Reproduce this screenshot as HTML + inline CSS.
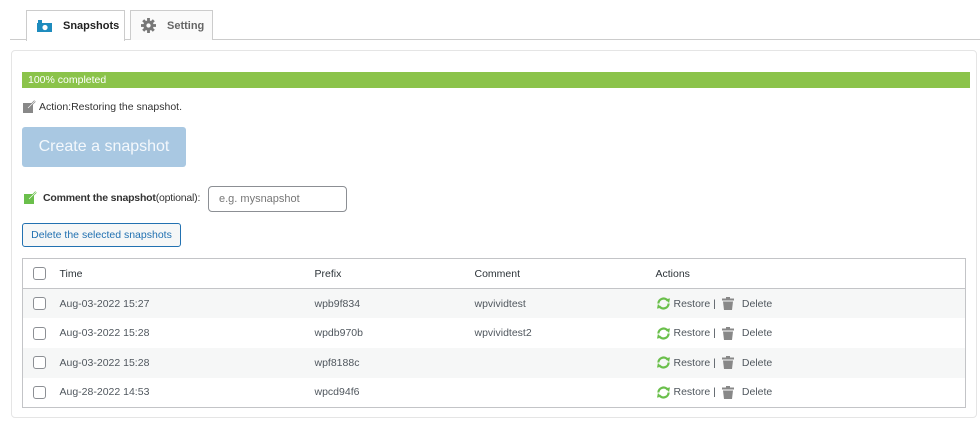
<!DOCTYPE html>
<html><head><meta charset="utf-8"><style>
*{box-sizing:border-box}
body{margin:0;width:980px;height:441px;background:#fff;font-family:"Liberation Sans",sans-serif;font-size:10.5px;color:#444;position:relative;overflow:hidden}
.abs{position:absolute}
.tabline{left:10px;right:0;top:39px;height:1px;background:#ccc}
.tab{top:10px;height:30px;border:1px solid #ccc;border-bottom:none;background:#fafafa;font-weight:bold;font-size:11px;color:#666;display:flex;align-items:center}
.tab.active{background:#fff;height:31px;color:#222}
.panel{left:11px;top:50px;width:966px;height:368px;border:1px solid #e5e5e5;border-radius:4px}
.bar{left:22px;top:72px;width:948px;height:16px;background:#8bc34a;color:#fff;font-size:10.5px;line-height:16px;padding-left:6px}
.btn{left:22px;top:127px;width:164px;height:40px;background:#a9c8e2;border-radius:3px;color:#f4f8fc;font-size:16px;text-align:center;line-height:40px}
.input{left:208px;top:186px;width:139px;height:26px;border:1px solid #8c8f94;border-radius:4px;color:#777;font-size:11px;line-height:24px;padding-left:10px}
.del{left:22px;top:223px;width:159px;height:24px;border:1px solid #2271b1;border-radius:3px;color:#2271b1;font-size:10.5px;line-height:22px;text-align:center;background:#f6f7f7}
table{position:absolute;left:22px;top:258px;width:944px;border:1px solid #c3c4c7;border-collapse:collapse;font-size:10.5px;color:#50575e}
td{height:29.7px;padding:0;vertical-align:middle}
tr.h td{height:30px;border-bottom:1px solid #c3c4c7;color:#2c3338}
tr.alt{background:#f6f7f7}
.cb{display:inline-block;width:13px;height:13px;border:1px solid #8c8f94;border-radius:3px;margin-left:10px;vertical-align:middle;background:#fff}
.act{display:flex;align-items:center;gap:3px}
</style></head><body>
<div class="abs tabline"></div>
<div class="abs tab active" style="left:26px;width:99px"><svg width="16" height="12" style="margin:0 10px 0 10px" viewBox="0 0 16 12"><rect x="0" y="3" width="15" height="9" fill="#1e8cbe"/><rect x="1" y="0" width="4" height="3" fill="#1e8cbe"/><circle cx="8" cy="7.5" r="2.6" fill="#fff"/></svg>Snapshots</div>
<div class="abs tab" style="left:130px;width:83px"><svg width="15" height="15" style="margin:0 11px 0 10px" viewBox="0 0 16 16"><g fill="#777"><circle cx="8" cy="8" r="5.5"/><rect x="6.5" y="0" width="3" height="16"/><rect x="0" y="6.5" width="16" height="3"/><rect x="6.5" y="0" width="3" height="16" transform="rotate(45 8 8)"/><rect x="6.5" y="0" width="3" height="16" transform="rotate(-45 8 8)"/></g><circle cx="8" cy="8" r="2.3" fill="#fafafa"/></svg>Setting</div>
<div class="abs panel"></div>
<div class="abs bar">100% completed</div>
<div class="abs" style="left:23px;top:100px;display:flex;align-items:center;color:#333"><svg width="13" height="13" viewBox="0 0 13 13"><rect x="0" y="3" width="10" height="10" fill="#888"/><path d="M5 8 L12 1" stroke="#888" stroke-width="2"/><path d="M5 8 L12 1" stroke="#fff" stroke-width=".6"/></svg><span style="margin-left:3px">Action:Restoring the snapshot.</span></div>
<div class="abs btn">Create a snapshot</div>
<div class="abs" style="left:24px;top:191px;display:flex;align-items:center;color:#333"><svg width="13" height="13" viewBox="0 0 13 13"><rect x="0" y="3" width="10" height="10" fill="#6abf4b"/><path d="M5 8 L12 1" stroke="#6abf4b" stroke-width="2"/><path d="M5 8 L12 1" stroke="#fff" stroke-width=".6"/></svg><span style="margin-left:6px;letter-spacing:-0.2px"><b>Comment the snapshot</b>(optional):</span></div>
<div class="abs input">e.g. mysnapshot</div>
<div class="abs del">Delete the selected snapshots</div>
<table>
<tr class="h"><td style="width:37px"><span class="cb"></span></td><td style="width:255px">Time</td><td style="width:160px">Prefix</td><td style="width:181px">Comment</td><td>Actions</td></tr>
<tr class="alt"><td><span class="cb"></span></td><td>Aug-03-2022 15:27</td><td>wpb9f834</td><td>wpvividtest</td><td>ACT</td></tr>
<tr><td><span class="cb"></span></td><td>Aug-03-2022 15:28</td><td>wpdb970b</td><td>wpvividtest2</td><td>ACT</td></tr>
<tr class="alt"><td><span class="cb"></span></td><td>Aug-03-2022 15:28</td><td>wpf8188c</td><td></td><td>ACT</td></tr>
<tr><td><span class="cb"></span></td><td>Aug-28-2022 14:53</td><td>wpcd94f6</td><td></td><td>ACT</td></tr>
</table>
<script>
var a='<span class="act"><svg width="15" height="13" viewBox="0 0 16 14"><path d="M2.5 7 A5.5 5.5 0 0 1 12.5 4" fill="none" stroke="#6abf4b" stroke-width="2.4"/><path d="M13.5 7 A5.5 5.5 0 0 1 3.5 10" fill="none" stroke="#6abf4b" stroke-width="2.4"/><path d="M10 2.5 L15 1.5 L14 6.5Z M6 11.5 L1 12.5 L2 7.5Z" fill="#6abf4b"/></svg>Restore | <svg width="12" height="13" viewBox="0 0 12 13" style="margin:0 5px 0 3px"><rect x="0" y="1.5" width="12" height="2" fill="#888"/><rect x="4" y="0" width="4" height="2" fill="#888"/><path d="M1 4.5 H11 L10 13 H2Z" fill="#888"/></svg>Delete</span>';
document.querySelectorAll('td').forEach(function(t){if(t.textContent==='ACT')t.innerHTML=a;});
</script>
</body></html>
